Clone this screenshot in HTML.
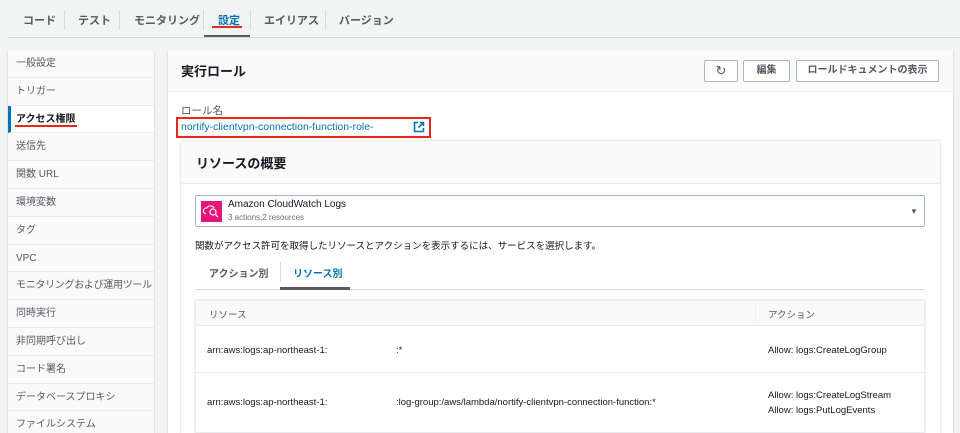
<!DOCTYPE html><html style="width:960px;height:433px;overflow:hidden"><head><meta charset="utf-8"><style>
*{box-sizing:border-box;margin:0;padding:0}
body{width:960px;height:433px;overflow:hidden;background:#f2f3f3;font-family:"Liberation Sans","Noto Sans CJK JP",sans-serif;color:#16191f;position:relative;font-size:11px}
.abs{position:absolute}
.tab{position:absolute;top:12px;font-size:11px;color:#545b64;font-weight:bold}
.sep{position:absolute;top:10px;width:1px;height:20px;background:#d5dbdb}
.side{position:absolute;left:8px;top:50px;width:146px;height:383px;background:#fff;box-shadow:0 1px 2px rgba(0,0,0,.2);overflow:hidden}
.si{height:27.8px;border-bottom:1px solid #eaeded;padding-left:8px;line-height:27px;font-size:10px;color:#545b64;background:#fafafa;white-space:nowrap;overflow:hidden}
.btn{position:absolute;top:60px;height:22px;border:1px solid #aab7b8;background:#fff;border-radius:2px;font-size:10px;font-weight:bold;color:#545b64;text-align:center;line-height:20px}
.td{position:absolute;font-size:9.5px;color:#16191f}
</style></head><body>
<div class="tab" style="left:23px">コード</div><div class="sep" style="left:64px"></div>
<div class="tab" style="left:78px">テスト</div><div class="sep" style="left:119px"></div>
<div class="tab" style="left:134px">モニタリング</div><div class="sep" style="left:203px"></div>
<div class="tab" style="left:218px;color:#0073bb">設定</div>
<div class="abs" style="left:212px;top:26px;width:30px;height:2px;background:#e8281b"></div>
<div class="abs" style="left:204px;top:35px;width:46px;height:3px;background:#545b64"></div>
<div class="sep" style="left:250px"></div>
<div class="tab" style="left:264px">エイリアス</div><div class="sep" style="left:325px"></div>
<div class="tab" style="left:339px">バージョン</div>
<div class="abs" style="left:8px;top:37px;width:952px;height:1px;background:#d5dbdb"></div>

<div class="side">
<div class="si">一般設定</div><div class="si">トリガー</div>
<div class="si" style="background:#fff;color:#16191f;font-weight:bold;border-left:3px solid #0073bb;padding-left:5px;position:relative">アクセス権限<div class="abs" style="left:4px;top:19px;width:62px;height:2px;background:#e8281b"></div></div>
<div class="si">送信先</div><div class="si">関数 URL</div><div class="si">環境変数</div><div class="si">タグ</div><div class="si">VPC</div><div class="si" style="letter-spacing:-0.3px">モニタリングおよび運用ツール</div><div class="si">同時実行</div><div class="si">非同期呼び出し</div><div class="si">コード署名</div><div class="si">データベースプロキシ</div><div class="si">ファイルシステム</div>
</div>

<div class="abs" style="left:168px;top:50px;width:785px;height:383px;background:#fff;box-shadow:0 1px 2px rgba(0,0,0,.2)"></div>
<div class="abs" style="left:168px;top:50px;width:785px;height:42px;background:#fafafa;border-bottom:1px solid #eaeded"></div>
<div class="abs" style="left:181px;top:61px;font-size:13px;font-weight:bold">実行ロール</div>
<div class="btn" style="left:704px;width:34px;font-size:13px;font-weight:normal">&#x21bb;</div>
<div class="btn" style="left:743px;width:47px">編集</div>
<div class="btn" style="left:796px;width:143px">ロールドキュメントの表示</div>

<div class="abs" style="left:181px;top:103px;font-size:10.5px;color:#545b64">ロール名</div>
<div class="abs" style="left:176px;top:117px;width:255px;height:21px;border:2px solid #e8281b"></div>
<div class="abs" style="left:181px;top:121px;font-size:10.5px;color:#0073bb">nortify-clientvpn-connection-function-role-</div>
<svg class="abs" style="left:413px;top:121px" width="12" height="12" viewBox="0 0 12 12"><path d="M5 1.5H1.5v9h9V7M7 1.5h3.5V5M10.5 1.5L5.5 6.5" fill="none" stroke="#0073bb" stroke-width="1.6"/></svg>

<div class="abs" style="left:181px;top:141px;width:759px;height:292px;background:#fff;box-shadow:0 0 2px rgba(0,0,0,.25)"></div>
<div class="abs" style="left:181px;top:141px;width:759px;height:43px;background:#fafafa;border-bottom:1px solid #eaeded"></div>
<div class="abs" style="left:196px;top:153px;font-size:13px;font-weight:bold">リソースの概要</div>

<div class="abs" style="left:195px;top:195px;width:730px;height:32px;border:1px solid #aab7b8;border-radius:2px;background:#fff"></div>
<div class="abs" style="left:201px;top:201px;width:21px;height:21px;background:#e7157b"></div>
<svg class="abs" style="left:203px;top:204px" width="17" height="15" viewBox="0 0 17 15"><path d="M3 10a3 3 0 0 1 1-6 4 4 0 0 1 7 0" fill="none" stroke="#fff" stroke-width="1"/><circle cx="10" cy="8" r="3" fill="none" stroke="#fff" stroke-width="1.2"/><path d="M12 10l3 3" stroke="#fff" stroke-width="1.3"/></svg>
<div class="abs" style="left:228px;top:199px;font-size:10px">Amazon CloudWatch Logs</div>
<div class="abs" style="left:228px;top:213px;font-size:8px;color:#687078">3 actions,2 resources</div>
<div class="abs" style="left:910px;top:207px;font-size:8px;color:#545b64">▼</div>

<div class="abs" style="left:195px;top:238px;font-size:9.5px">関数がアクセス許可を取得したリソースとアクションを表示するには、サービスを選択します。</div>
<div class="abs" style="left:209px;top:265px;font-size:10px;color:#545b64;font-weight:bold">アクション別</div>
<div class="abs" style="left:280px;top:262px;width:1px;height:20px;background:#d5dbdb"></div>
<div class="abs" style="left:293px;top:265px;font-size:10px;color:#0073bb;font-weight:bold">リソース別</div>
<div class="abs" style="left:195px;top:289px;width:730px;height:1px;background:#d5dbdb"></div>
<div class="abs" style="left:280px;top:287px;width:70px;height:3px;background:#545b64"></div>

<div class="abs" style="left:195px;top:300px;width:730px;height:133px;border:1px solid #eaeded;box-shadow:0 0 2px rgba(0,0,0,.15)"></div>
<div class="abs" style="left:196px;top:301px;width:728px;height:25px;background:#fafafa;border-bottom:1px solid #eaeded"></div>
<div class="abs" style="left:755px;top:304px;width:1px;height:18px;background:#eaeded"></div>
<div class="td" style="left:209px;top:307px;color:#545b64">リソース</div>
<div class="td" style="left:768px;top:307px;color:#545b64">アクション</div>
<div class="abs" style="left:196px;top:372px;width:728px;height:1px;background:#eaeded"></div>
<div class="td" style="left:207px;top:345px">arn:aws:logs:ap-northeast-1:</div>
<div class="td" style="left:396px;top:345px">:*</div>
<div class="td" style="left:768px;top:345px">Allow: logs:CreateLogGroup</div>
<div class="td" style="left:207px;top:397px">arn:aws:logs:ap-northeast-1:</div>
<div class="td" style="left:396px;top:397px">:log-group:/aws/lambda/nortify-clientvpn-connection-function:*</div>
<div class="td" style="left:768px;top:390px">Allow: logs:CreateLogStream</div>
<div class="td" style="left:768px;top:405px">Allow: logs:PutLogEvents</div>
</body></html>
